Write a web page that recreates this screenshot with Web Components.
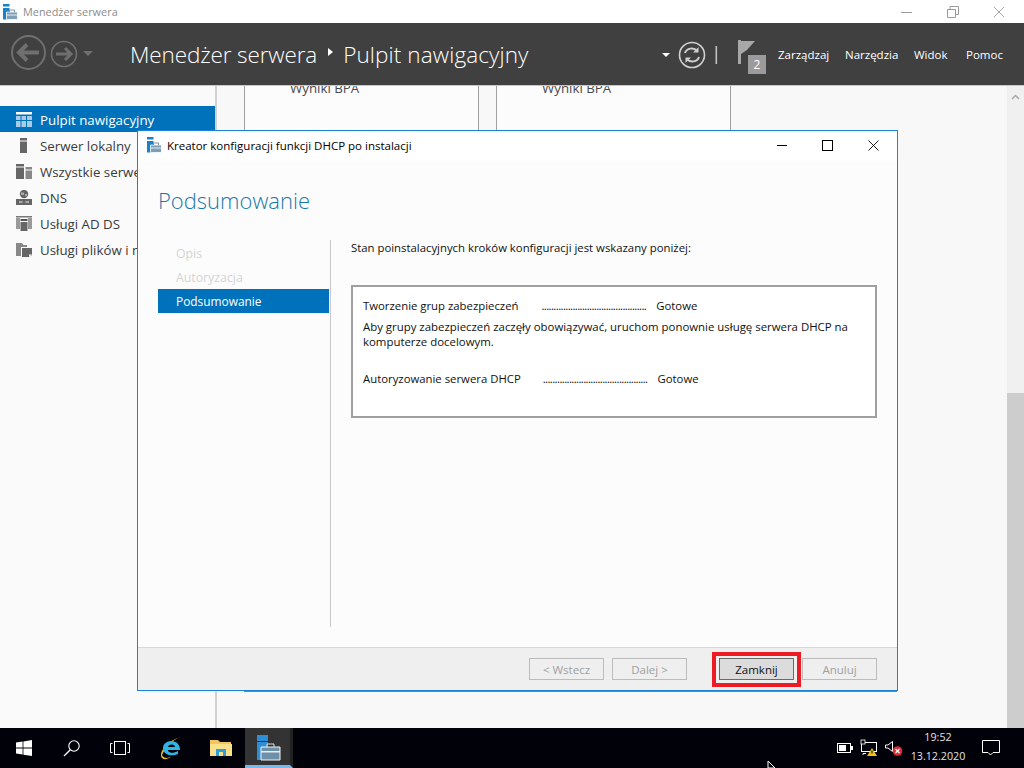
<!DOCTYPE html>
<html lang="pl">
<head>
<meta charset="utf-8">
<title>Menedżer serwera</title>
<style>
    html, body { margin: 0; padding: 0; height: 100%; background: #f8f8f8; overflow: hidden; }
    body { font-family: "Open Sans", "Noto Sans", sans-serif; }
    #cursor { position: absolute; left: 766px; top: 761px; }
</style>
</head>
<body>
<sm-shell>
    <sm-titlebar slot="title">Menedżer serwera</sm-titlebar>
    <sm-header slot="header"></sm-header>
    <sm-sidebar slot="side">
        <sm-nav-item icon="dash" active>Pulpit nawigacyjny</sm-nav-item>
        <sm-nav-item icon="server">Serwer lokalny</sm-nav-item>
        <sm-nav-item icon="all">Wszystkie serwery</sm-nav-item>
        <sm-nav-item icon="dns">DNS</sm-nav-item>
        <sm-nav-item icon="ad">Usługi AD DS</sm-nav-item>
        <sm-nav-item icon="files">Usługi plików i magazynowania</sm-nav-item>
    </sm-sidebar>
    <sm-content slot="content">
        <sm-card>Wyniki BPA</sm-card>
        <sm-card>Wyniki BPA</sm-card>
    </sm-content>
    <sm-taskbar slot="taskbar"></sm-taskbar>
</sm-shell>
<wizard-dialog heading="Podsumowanie" caption="Kreator konfiguracji funkcji DHCP po instalacji">
    <wizard-step slot="steps">Opis</wizard-step>
    <wizard-step slot="steps">Autoryzacja</wizard-step>
    <wizard-step slot="steps" active>Podsumowanie</wizard-step>
    <wizard-result>
        <result-row dots="44" gap="23">Tworzenie grup zabezpieczeń<span slot="state">Gotowe</span></result-row>
        <div slot="note">Aby grupy zabezpieczeń zaczęły obowiązywać, uruchom ponownie usługę serwera DHCP na komputerze docelowym.</div>
        <result-row slot="last" dots="44" gap="22">Autoryzowanie serwera DHCP<span slot="state">Gotowe</span></result-row>
    </wizard-result>
    <wizard-button slot="buttons" disabled>&lt; Wstecz</wizard-button>
    <wizard-button slot="buttons" disabled>Dalej &gt;</wizard-button>
    <wizard-button slot="buttons" primary>Zamknij</wizard-button>
    <wizard-button slot="buttons" disabled>Anuluj</wizard-button>
</wizard-dialog>
<svg id="cursor" width="10" height="7" viewBox="0 0 10 7"><path d="M2 0V7H9L2 0Z" fill="#000" stroke="#fff"/></svg>

<script>
const APP_ICON = `<svg width="15" height="16" viewBox="0 0 15 16">
    <rect x="0" y="0" width="6.5" height="2.5" fill="#1c82c8"/>
    <rect x="0" y="4" width="6.5" height="11.5" fill="#1c82c8"/>
    <path d="M3.5 15.5V8H14.5V15.5Z" fill="#7f9fb8" stroke="#fff" stroke-width="0.8"/>
    <path d="M6.5 8V6H11.5V8" fill="none" stroke="#7b93a6" stroke-width="1"/>
    <rect x="3.5" y="10.5" width="11" height="1" fill="#e8eef2"/>
</svg>`;

class SmShell extends HTMLElement {
    constructor() {
        super();
        this.attachShadow({ mode: "open" });
        this.shadowRoot.innerHTML = `
            <style>
                :host { display: flex; flex-direction: column; width: 1024px; height: 768px; }
                .main { flex: 1; display: flex; min-height: 0; }
            </style>
            <slot name="title"></slot>
            <slot name="header"></slot>
            <div class="main">
                <slot name="side"></slot>
                <slot name="content"></slot>
            </div>
            <slot name="taskbar"></slot>
        `;
    }
}

class SmTitlebar extends HTMLElement {
    constructor() {
        super();
        this.attachShadow({ mode: "open" });
        this.shadowRoot.innerHTML = `
            <style>
                :host { display: flex; align-items: center; height: 23px; background: #fff; color: #8c8c8c; font-size: 10.9px; }
                .icon { margin: 0 5px 0 3px; height: 16px; }
                .text { flex: 1; }
                .ctl { display: flex; padding-right: 19px; gap: 34px; align-items: center; }
            </style>
            <div class="icon">${APP_ICON}</div>
            <div class="text"><slot></slot></div>
            <div class="ctl">
                <svg width="12" height="12" viewBox="0 0 12 12"><path d="M0 6.5H11" stroke="#9a9a9a"/></svg>
                <svg width="12" height="12" viewBox="0 0 12 12"><path d="M0.5 3.5H8.5V11.5H0.5ZM3 3V0.5H11.5V8.5H9" fill="none" stroke="#9a9a9a"/></svg>
                <svg width="12" height="12" viewBox="0 0 12 12"><path d="M1 1L11 11M11 1L1 11" stroke="#9a9a9a" stroke-width="0.9"/></svg>
            </div>
        `;
    }
}

class SmHeader extends HTMLElement {
    constructor() {
        super();
        this.attachShadow({ mode: "open" });
        this.shadowRoot.innerHTML = `
            <style>
                :host { display: flex; align-items: center; height: 62px; box-sizing: content-box; background: #404040; color: #fff; border-bottom: 1px solid #c8c8c8; }
                .nav { display: flex; align-items: center; width: 130px; height: 100%; }
                .path { flex: 1; display: flex; align-items: center; font-size: 22.5px; font-weight: 300; white-space: nowrap; }
                .path .a { letter-spacing: -0.12px; }
                .path .b { letter-spacing: 0.12px; }
                .sep { margin: 0 10px 5px 11px; width: 0; height: 0; border-left: 5px solid #fff; border-top: 4px solid transparent; border-bottom: 4px solid transparent; }
                .tools { display: flex; align-items: center; height: 100%; }
                .menu { display: flex; font-size: 11.5px; }
                .menu span { white-space: nowrap; }
            </style>
            <div class="nav">
                <svg width="100" height="62" viewBox="0 0 100 62">
                    <g fill="none" stroke="#6f6f6f">
                        <circle cx="28.5" cy="29.5" r="16.5" stroke-width="2"/>
                        <path d="M39 29.5H20M27 21.5L19 29.5L27 37.5" stroke-width="4"/>
                        <circle cx="64" cy="31" r="12.5" stroke-width="1.6"/>
                        <path d="M56 31H70M65 25L71 31L65 37" stroke-width="3"/>
                    </g>
                    <path d="M83 28H93L88 33Z" fill="#6f6f6f"/>
                </svg>
            </div>
            <div class="path"><span class="a">Menedżer serwera</span><i class="sep"></i><span class="b">Pulpit nawigacyjny</span></div>
            <div class="tools">
                <svg width="112" height="62" viewBox="0 0 112 62" style="margin-right:6px">
                    <path d="M2 30H10L6 34Z" fill="#fff"/>
                    <g transform="translate(2 0)">
                        <circle cx="30" cy="32" r="12.5" fill="none" stroke="#d0d0d0" stroke-width="1.6"/>
                        <path d="M23 30C24.5 25 32 24 35 28M37 34C35.5 39 28 40 25 36" fill="none" stroke="#d0d0d0" stroke-width="2"/>
                        <path d="M36.5 24V29.5H31ZM23.5 40V34.5H29Z" fill="#d0d0d0"/>
                    </g>
                    <rect x="55.5" y="23" width="1.6" height="18" fill="#c0c0c0"/>
                    <rect x="78" y="17" width="3" height="24" fill="#a8a8a8"/>
                    <path d="M81 18H95L87 27L81 31Z" fill="#a8a8a8"/>
                    <rect x="88" y="32" width="18" height="19" fill="#9c9a9c"/>
                    <text x="97" y="46" font-size="12" text-anchor="middle" fill="#fff" font-family="Open Sans">2</text>
                </svg>
                <div class="menu">
                    <span style="width:67px">Zarządzaj</span>
                    <span style="width:69px">Narzędzia</span>
                    <span style="width:52px">Widok</span>
                    <span style="width:58px">Pomoc</span>
                </div>
            </div>
        `;
    }
}

class SmSidebar extends HTMLElement {
    constructor() {
        super();
        this.attachShadow({ mode: "open" });
        this.shadowRoot.innerHTML = `
            <style>
                :host { display: block; box-sizing: content-box; width: 215px; padding-top: 20px; background: #fafafa; border-right: 2px solid #d2d2d2; overflow: hidden; flex: none; }
            </style>
            <slot></slot>
        `;
    }
}

const NAV_ICONS = {
    dash: `<rect x="0" y="0" width="16" height="2.5" fill="#fff"/><path d="M0 4H4.5V8H0ZM5.5 4H10V8H5.5ZM11 4H16V8H11ZM0 9H4.5V15H0ZM5.5 9H10V15H5.5ZM11 9H16V15H11Z" fill="#a9cbe6"/>`,
    server: `<rect x="4" y="0" width="7" height="2.5" fill="#666"/><rect x="4" y="3.5" width="7" height="11.5" fill="#666"/>`,
    all: `<rect x="0" y="0" width="8" height="2.5" fill="#666"/><rect x="0" y="3.5" width="8" height="11.5" fill="#666"/><rect x="9.5" y="3" width="6.5" height="2.5" fill="#888"/><rect x="9.5" y="6.5" width="6.5" height="8.5" fill="#888"/>`,
    dns: `<circle cx="8" cy="4" r="4.2" fill="#666"/><path d="M5 2.5H8V5H5ZM9 4H11V6H9Z" fill="#aaa"/><rect x="0" y="9" width="16" height="6" fill="#666"/><path d="M3 11.5H6.5V12.5H3ZM9.5 11.5H13V12.5H9.5Z" fill="#eee"/>`,
    ad: `<path d="M0 2H4V13H0ZM12 2H16V13H12Z" fill="#999"/><rect x="0" y="0" width="16" height="1.5" fill="#777"/><rect x="4.5" y="3" width="7" height="2" fill="#555"/><rect x="4.5" y="6" width="7" height="9" fill="#666"/>`,
    files: `<path d="M0 1H6L7.5 3H11V5H5V14H0Z" fill="#888"/><path d="M6 6H16V13L13 15H6Z" fill="#666"/><path d="M13 15V12.5H16" fill="#fff"/>`
};

class SmNavItem extends HTMLElement {
    connectedCallback() {
        if (this.shadowRoot) return;
        this.attachShadow({ mode: "open" });
        this.shadowRoot.innerHTML = `
            <style>
                :host { display: flex; align-items: center; height: 26px; box-sizing: border-box; padding: 1px 0 0 16px; gap: 8px; font-size: 13.3px; color: #3b3b3b; white-space: nowrap; }
                :host([active]) { background: #0072bc; color: #fff; }
                svg { flex: none; }
            </style>
            <svg width="16" height="16" viewBox="0 0 16 16">${NAV_ICONS[this.getAttribute("icon")]}</svg>
            <slot></slot>
        `;
    }
}

class SmContent extends HTMLElement {
    constructor() {
        super();
        this.attachShadow({ mode: "open" });
        this.shadowRoot.innerHTML = `
            <style>
                :host { flex: 1; display: flex; min-width: 0; background: #f8f8f8; }
                .pane { flex: 1; min-width: 0; overflow: hidden; display: flex; flex-direction: column; padding-left: 27px; }
                .cards { display: flex; gap: 17px; height: 605px; flex: none; }
                .strip { height: 1px; width: 653px; background: #4a8fc9; }
                .bar { width: 17px; flex: none; background: #f0f0f0; display: flex; flex-direction: column; }
                .bar svg { margin: 8px auto 0; }
                .gap { flex: 1; }
                .thumb { height: 335px; background: #cdcdcd; }
            </style>
            <div class="pane">
                <div class="cards"><slot></slot></div>
                <div class="strip"></div>
            </div>
            <div class="bar">
                <svg width="9" height="6" viewBox="0 0 9 6"><path d="M1 5L4.5 1.5L8 5" fill="none" stroke="#a8a8a8" stroke-width="1.5"/></svg>
                <div class="gap"></div>
                <div class="thumb"></div>
            </div>
        `;
    }
}

class SmCard extends HTMLElement {
    constructor() {
        super();
        this.attachShadow({ mode: "open" });
        this.shadowRoot.innerHTML = `
            <style>
                :host { display: block; width: 233px; box-sizing: content-box; background: #fcfcfc; border: 1px solid #a0a0a0; border-width: 0 1px; font-size: 13.3px; color: #4a4a4a; overflow: hidden; }
                .t { margin: -8px 0 0 45px; line-height: 20px; }
            </style>
            <div class="t"><slot></slot></div>
        `;
    }
}

class SmTaskbar extends HTMLElement {
    constructor() {
        super();
        this.attachShadow({ mode: "open" });
        this.shadowRoot.innerHTML = `
            <style>
                :host { display: flex; align-items: stretch; height: 40px; flex: none; background: #01010a; color: #e4e4e4; font-size: 12px; }
                .b { width: 48px; display: flex; align-items: center; justify-content: center; flex: none; }
                .ie { width: 53px; }
                .cur { box-sizing: border-box; background: #333; border-bottom: 3px solid #76b9ed; border-right: 3px solid #222; padding-top: 3px; }
                .fill { flex: 1; }
                .tray { display: flex; align-items: center; gap: 7px; }
                .clock { width: 70px; text-align: center; line-height: 19px; font-size: 10.7px; }
                .note { width: 36px; margin-right: 15px; display: flex; align-items: center; justify-content: center; }
            </style>
            <div class="b">
                <svg width="16" height="16" viewBox="0 0 16 16"><path d="M0 2.4L6.6 1.5V7.6H0ZM7.4 1.4L16 0V7.6H7.4ZM0 8.4H6.6V14.6L0 13.6ZM7.4 8.4H16V16L7.4 14.7Z" fill="#fff"/></svg>
            </div>
            <div class="b">
                <svg width="18" height="18" viewBox="0 0 18 18"><circle cx="11" cy="7" r="5.2" fill="none" stroke="#fff" stroke-width="1.1"/><path d="M7.3 10.7L1 17" stroke="#fff" stroke-width="1.3"/></svg>
            </div>
            <div class="b">
                <svg width="20" height="14" viewBox="0 0 20 14"><rect x="4.5" y="0.5" width="11" height="13" fill="none" stroke="#fff"/><path d="M2.5 2.5H0.5V11.5H2.5M17.5 2.5H19.5V11.5H17.5" fill="none" stroke="#fff"/></svg>
            </div>
            <div class="b ie">
                <svg width="24" height="24" viewBox="0 0 24 24">
                    <path d="M2 20C1 15 9 4 22 1C17 2 8 8 3 19C5 23 9 22 12 21C7 24 3 24 2 20Z" fill="#e8b923"/>
                    <path d="M12 5C18 5 21 9 21 14H9C9 17 14 18 19 15V18C13 21 4 19 4 12C4 8 8 5 12 5ZM9 11H16C16 8 10 7.5 9 11Z" fill="#2fb4e6"/>
                </svg>
            </div>
            <div class="b">
                <svg width="22" height="18" viewBox="0 0 22 18">
                    <path d="M0 1H8L10 3H21V17H0Z" fill="#f0c75e"/>
                    <rect x="0" y="5" width="22" height="12" fill="#fbe08c"/>
                    <path d="M6 17V10H16V17H13V13H9V17Z" fill="#2e9ed8"/>
                </svg>
            </div>
            <div class="b cur">
                <svg width="26" height="26" viewBox="0 0 26 26">
                    <rect x="2" y="0" width="11" height="6" fill="#2a8fd6"/>
                    <rect x="2" y="7" width="11" height="18" fill="#2a8fd6"/>
                    <path d="M6 25V12H25V25Z" fill="#6e90aa" stroke="#f0f4f7"/>
                    <path d="M12 12V9H19V12" fill="none" stroke="#d8e2ea"/>
                    <rect x="6" y="16" width="19" height="1.5" fill="#e8eef2"/>
                </svg>
            </div>
            <div class="fill"></div>
            <div class="tray">
                <svg width="16" height="10" viewBox="0 0 16 10"><rect x="0.5" y="0.5" width="13" height="9" fill="none" stroke="#fff"/><rect x="2" y="2" width="7" height="6" fill="#fff"/><rect x="14" y="3" width="2" height="4" fill="#fff"/></svg>
                <svg width="18" height="18" viewBox="0 0 18 18"><rect x="1.5" y="3.5" width="15" height="9" fill="none" stroke="#fff"/><rect x="1" y="1" width="4" height="4" fill="#01010a" stroke="#fff" stroke-width="0.8"/><path d="M6 14.5H3V16" stroke="#fff" fill="none"/><path d="M12 9L17 17H7Z" fill="#f5c21a"/><rect x="11.5" y="11.5" width="1" height="3" fill="#000"/></svg>
                <svg width="18" height="16" viewBox="0 0 18 16"><path d="M0.5 5H3L7.5 1.5V11.5L3 8H0.5Z" fill="none" stroke="#fff"/><circle cx="12.5" cy="11" r="4.8" fill="#dd2c35"/><path d="M10.5 9L14.5 13M14.5 9L10.5 13" stroke="#fff" stroke-width="1.2"/></svg>
            </div>
            <div class="clock">19:52<br>13.12.2020</div>
            <div class="note">
                <svg width="18" height="16" viewBox="0 0 18 16"><path d="M0.5 0.5H17.5V12.5H11L8.5 15L6 12.5H0.5Z" fill="none" stroke="#fff"/></svg>
            </div>
        `;
    }
}

class WizardDialog extends HTMLElement {
    connectedCallback() {
        if (this.shadowRoot) return;
        this.attachShadow({ mode: "open" });
        this.shadowRoot.innerHTML = `
            <style>
                :host { position: absolute; left: 137px; top: 130px; width: 761px; height: 561px; box-sizing: border-box; display: flex; flex-direction: column; background: #fcfcfc; border: 1px solid #1883d7; font-size: 11.35px; color: #111; }
                .cap { display: flex; align-items: center; height: 30px; box-sizing: border-box; padding: 0 0 2px 9px; background: #fff; gap: 5px; flex: none; font-size: 11.5px; }
                .cap .name { flex: 1; color: #000; }
                .ctl { display: flex; gap: 35px; padding-right: 18px; }
                h1 { margin: 0; padding: 24px 0 0 20px; height: 54px; box-sizing: border-box; font-size: 22px; font-weight: 300; color: #1a78a8; line-height: 30px; }
                .body { flex: 1; display: flex; min-height: 0; padding: 25px 0 20px 20px; }
                .steps { width: 171px; flex: none; padding-top: 1px; }
                .rule { width: 1px; margin: 0 20px 0 1px; background: #c8c8c8; flex: none; }
                .page { flex: 1; padding-right: 20px; }
                .page p { margin: 0 0 29px; line-height: 16px; }
                .foot { height: 42px; flex: none; box-sizing: content-box; background: #efefef; border-top: 1px solid #d8d8d8; display: flex; align-items: center; justify-content: flex-end; padding-right: 20px; gap: 8px; }
            </style>
            <div class="cap">
                ${APP_ICON}
                <div class="name">${this.getAttribute("caption")}</div>
                <div class="ctl">
                    <svg width="11" height="11" viewBox="0 0 11 11"><path d="M1 5.5H11" stroke="#000"/></svg>
                    <svg width="11" height="11" viewBox="0 0 11 11"><rect x="0.5" y="0.5" width="10" height="10" fill="none" stroke="#000"/></svg>
                    <svg width="11" height="11" viewBox="0 0 11 11"><path d="M0.5 0.5L10.5 10.5M10.5 0.5L0.5 10.5" stroke="#000" stroke-width="0.9"/></svg>
                </div>
            </div>
            <h1>${this.getAttribute("heading")}</h1>
            <div class="body">
                <div class="steps"><slot name="steps"></slot></div>
                <div class="rule"></div>
                <div class="page">
                    <p>Stan poinstalacyjnych kroków konfiguracji jest wskazany poniżej:</p>
                    <slot></slot>
                </div>
            </div>
            <div class="foot"><slot name="buttons"></slot></div>
        `;
    }
}

class WizardStep extends HTMLElement {
    constructor() {
        super();
        this.attachShadow({ mode: "open" });
        this.shadowRoot.innerHTML = `
            <style>
                :host { display: flex; align-items: center; height: 24px; padding-left: 18px; color: #d4d4d4; font-size: 12.3px; }
                :host([active]) { background: #0072bc; color: #fff; font-size: 11.9px; }
            </style>
            <slot></slot>
        `;
    }
}

class WizardResult extends HTMLElement {
    constructor() {
        super();
        this.attachShadow({ mode: "open" });
        this.shadowRoot.innerHTML = `
            <style>
                :host { display: block; height: 133px; box-sizing: border-box; border: 2px solid #a0a0a0; padding: 11px 10px 0; background: #fff; line-height: 15px; }
                ::slotted(div) { margin-top: 6px; margin-bottom: 22px; font-size: 11.42px; }
            </style>
            <slot></slot>
            <slot name="note"></slot>
            <slot name="last"></slot>
        `;
    }
}

class ResultRow extends HTMLElement {
    connectedCallback() {
        if (this.shadowRoot) return;
        this.attachShadow({ mode: "open" });
        const dots = ".".repeat(Number(this.getAttribute("dots")));
        this.shadowRoot.innerHTML = `
            <style>
                :host { display: flex; white-space: nowrap; }
                .d { margin: 0 10px 0 ${this.getAttribute("gap")}px; letter-spacing: -0.6px; }
            </style>
            <slot></slot><span class="d">${dots}</span><slot name="state"></slot>
        `;
    }
}

class WizardButton extends HTMLElement {
    constructor() {
        super();
        this.attachShadow({ mode: "open" });
        this.shadowRoot.innerHTML = `
            <style>
                :host { display: flex; position: relative; align-items: center; justify-content: center; width: 75px; height: 22px; box-sizing: border-box; border: 1px solid #bcbcbc; color: #a0a0a0; font-size: 11.5px; background: #efefef; }
                :host([primary]) { border-color: #6a6a6a; background: #dcdcdc; color: #111; margin-left: 24px; }
                :host([primary])::before { content: ""; position: absolute; left: -8px; top: -7px; width: 89px; height: 35px; box-sizing: border-box; border: 4px solid #ed1c24; }
            </style>
            <slot></slot>
        `;
    }
}

customElements.define("sm-shell", SmShell);
customElements.define("sm-titlebar", SmTitlebar);
customElements.define("sm-header", SmHeader);
customElements.define("sm-sidebar", SmSidebar);
customElements.define("sm-nav-item", SmNavItem);
customElements.define("sm-content", SmContent);
customElements.define("sm-card", SmCard);
customElements.define("sm-taskbar", SmTaskbar);
customElements.define("wizard-dialog", WizardDialog);
customElements.define("wizard-step", WizardStep);
customElements.define("wizard-result", WizardResult);
customElements.define("result-row", ResultRow);
customElements.define("wizard-button", WizardButton);
</script>
</body>
</html>
